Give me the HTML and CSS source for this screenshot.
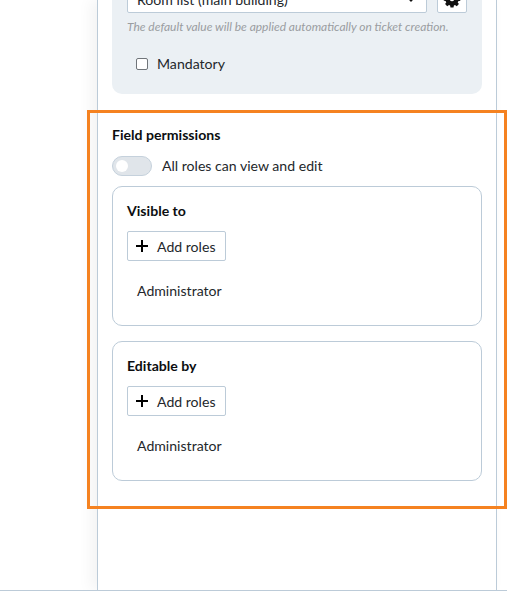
FILE: index.html
```html
<!DOCTYPE html>
<html lang="en">
<head>
<meta charset="utf-8">
<title>Field permissions</title>
<link rel="stylesheet" href="styles.css">
</head>
<body>
<div class="page">
  <section class="panel">
    <div class="default-card">
      <div class="select-row">
        <div class="select">
          <span>Room list (main building)</span>
          <svg class="caret" width="10" height="6" viewBox="0 0 10 6"><path d="M.8 0h8.400a.7.7 0 0 1 .5 1.200L5.500 5.400a.7.7 0 0 1-1 0L.3 1.200A.7.7 0 0 1 .8 0z"/></svg>
        </div>
        <div class="gear-btn">
          <svg width="16" height="16" viewBox="0 0 16 16"><path fill-rule="evenodd" d="M6.500 0h3l.4 2.100 1.100.5 1.800-1.200 2.100 2.100-1.200 1.800.5 1.100 2.100.4v3l-2.100.4-.5 1.100 1.200 1.800-2.100 2.100-1.800-1.200-1.100.5-.4 2.100h-3l-.4-2.100-1.100-.5-1.800 1.200-2.100-2.100 1.200-1.800-.5-1.100L-.300 9.500v-3l2.100-.4.5-1.100-1.200-1.800 2.100-2.100 1.800 1.200 1.100-.5zM8 5.800a2.200 2.200 0 1 0 0 4.400 2.200 2.200 0 0 0 0-4.400z"/></svg>
        </div>
      </div>
      <p class="hint">The default value will be applied automatically on ticket creation.</p>
      <label class="mandatory"><span class="checkbox"></span>Mandatory</label>
    </div>

    <div class="permissions">
      <h3 class="section-title">Field permissions</h3>
      <div class="toggle-row">
        <span class="toggle"><span class="knob"></span></span>
        <span>All roles can view and edit</span>
      </div>
      <div class="role-card">
        <h4 class="card-title">Visible to</h4>
        <div class="add-btn">
          <svg width="14" height="14" viewBox="0 0 14 14"><path d="M7 1v12M1 7h12" stroke="#000" stroke-width="2"/></svg>
          <span>Add roles</span>
        </div>
        <div class="role-item">Administrator</div>
      </div>
      <div class="role-card">
        <h4 class="card-title">Editable by</h4>
        <div class="add-btn">
          <svg width="14" height="14" viewBox="0 0 14 14"><path d="M7 1v12M1 7h12" stroke="#000" stroke-width="2"/></svg>
          <span>Add roles</span>
        </div>
        <div class="role-item">Administrator</div>
      </div>
    </div>
  </section>
  <div class="highlight"></div>
</div>
</body>
</html>
```

FILE: styles.css
```css
* { box-sizing: border-box; }
html, body { margin: 0; padding: 0; background: #fff; }
body { font-family: Lato, "Open Sans", sans-serif; color: #23272b; font-size: 14.1px; }
.page {
  position: relative;
  width: 507px;
  height: 591px;
  overflow: hidden;
  border-bottom: 1px solid #bccbd8;
  padding-left: 97px;
}
.panel {
  width: 400px;
  height: 590px;
  background: #fff;
  border-left: 1px solid #bccbd8;
  border-right: 1px solid #bccbd8;
  box-shadow: -6px 0 14px rgba(0, 0, 0, 0.05);
  padding: 0 14px;
}
.default-card {
  height: 94px;
  background: #ebf0f4;
  border-radius: 0 0 10px 10px;
  padding: 0 15px;
  display: flex;
  flex-direction: column;
  justify-content: flex-end;
  overflow: hidden;
}
.select-row { display: flex; gap: 10px; flex: none; }
.select, .gear-btn {
  height: 28px;
  background: #fff;
  border: 1px solid #bccbd8;
  border-radius: 2px;
}
.select {
  width: 300px;
  display: flex;
  align-items: center;
  justify-content: space-between;
  padding: 0 10px 0 9px;
}
.caret { fill: #111; }
.gear-btn { width: 30px; display: flex; align-items: center; justify-content: center; }
.gear-btn svg { fill: #111; overflow: visible; }
.hint { margin: 6px 0 0; font-size: 12px; line-height: 16px; font-style: italic; color: #9a9da1; }
.mandatory { display: flex; align-items: center; gap: 9px; margin: 19px 0 20px 9px; line-height: 20px; flex: none; }
.checkbox { width: 12px; height: 12px; background: #fff; border: 1px solid #70757a; border-radius: 2px; }
.permissions { padding-top: 31px; }
.section-title { margin: 0; font-size: 14.1px; line-height: 20px; font-weight: 700; color: #0c0e10; }
.toggle-row { display: flex; align-items: center; gap: 10px; margin-top: 11px; line-height: 20px; }
.toggle {
  width: 40px;
  height: 20px;
  background: #e0e5ea;
  border: 1px solid #c5d1dc;
  border-radius: 10px;
  display: flex;
  align-items: center;
  padding-left: 3px;
}
.knob { width: 12px; height: 12px; background: #fff; border-radius: 50%; }
.role-card {
  height: 140px;
  border: 1px solid #bccbd8;
  border-radius: 10px;
  padding: 14px;
  margin-top: 10px;
}
.role-card + .role-card { margin-top: 15px; }
.card-title { margin: 0; font-size: 14.1px; line-height: 20px; font-weight: 700; color: #0c0e10; }
.add-btn {
  display: inline-flex;
  align-items: center;
  gap: 8px;
  height: 30px;
  margin-top: 10px;
  padding: 0 10px 0 7px;
  border: 1px solid #bccbd8;
  border-radius: 2px;
  background: #fff;
}
.role-item { margin: 20px 0 0 10px; line-height: 20px; }
.highlight {
  position: absolute;
  left: 87px;
  top: 110px;
  width: 420px;
  height: 399px;
  border: 3px solid #f58220;
  pointer-events: none;
}
```
